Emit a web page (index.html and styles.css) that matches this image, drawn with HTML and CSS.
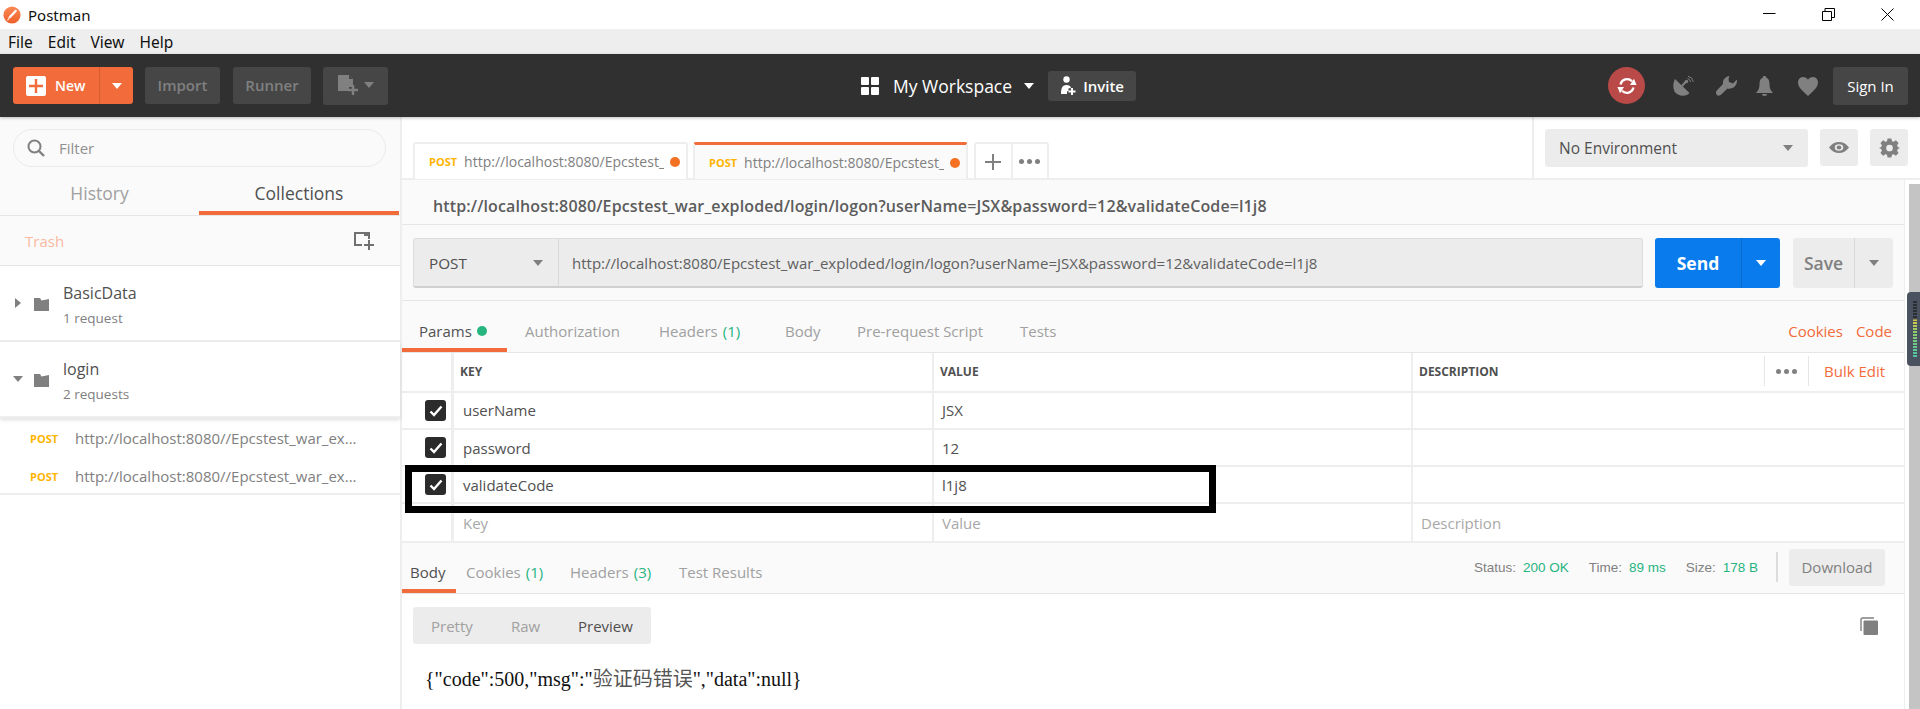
FILE: index.html
```html
<!DOCTYPE html>
<html lang="en">
<head>
<meta charset="utf-8">
<title>Postman</title>
<link rel="stylesheet" href="styles.css">
</head>
<body>
<div class="titlebar">
  <svg class="logo" viewBox="0 0 20 20"><defs><linearGradient id="lg" x1="0" y1="0" x2="0" y2="1"><stop offset="0" stop-color="#fb8a55"/><stop offset="1" stop-color="#ef5f28"/></linearGradient></defs><circle cx="10" cy="10" r="9.500" fill="url(#lg)"/><path d="M7.500 12.500l6.500-7" stroke="#fff" stroke-width="2.600" stroke-linecap="round"/><path d="M7.500 12.500L5 16" stroke="#ffe0d0" stroke-width="1.300"/></svg>
  <span class="app-name">Postman</span>
  <div class="win-controls">
    <svg class="win-icon" viewBox="0 0 13 13"><path d="M0 5.500h12.500" stroke="#000" stroke-width="1"/></svg>
    <svg class="win-icon" viewBox="0 0 13 13"><path d="M.5 3.500h9v9h-9zM3 3.500V.5h9.500v9H9.500" fill="none" stroke="#000" stroke-width="1"/></svg>
    <svg class="win-icon" viewBox="0 0 13 13"><path d="M.5.5l12 12M12.500.5l-12 12" stroke="#000" stroke-width="1"/></svg>
  </div>
</div>
<nav class="menubar"><span>File</span><span>Edit</span><span>View</span><span>Help</span></nav>
<header class="topbar">
  <div class="top-left">
    <div class="btn-new">
      <div class="btn-new-main">
        <svg class="plus-box" viewBox="0 0 20 20"><rect width="20" height="20" rx="2" fill="#fff"/><path d="M10 3v14M3 10h14" stroke="#f26b3a" stroke-width="2.400"/></svg>
        <span>New</span>
      </div>
      <div class="btn-new-caret"><span class="caret caret-white"></span></div>
    </div>
    <div class="btn-dark btn-import">Import</div>
    <div class="btn-dark btn-runner">Runner</div>
    <div class="btn-dark btn-add">
      <svg class="add-icon" viewBox="0 0 20 20"><path d="M0 0h11l4 4v8h-4v4H0z" fill="#808080"/><path d="M11 0v4h4" fill="#464646"/><path d="M15 10v10M10 15h10" stroke="#808080" stroke-width="2.400"/></svg>
      <span class="caret caret-grey"></span>
    </div>
  </div>
  <div class="top-center">
    <svg class="grid-icon" viewBox="0 0 18 18"><rect width="8" height="8" rx="1" fill="#fff"/><rect x="10" width="8" height="8" rx="1" fill="#fff"/><rect y="10" width="8" height="8" rx="1" fill="#fff"/><rect x="10" y="10" width="8" height="8" rx="1" fill="#fff"/></svg>
    <span class="ws-name">My Workspace</span>
    <span class="caret caret-white ws-caret"></span>
    <div class="btn-invite">
      <svg class="invite-icon" viewBox="0 0 16 20"><circle cx="6.500" cy="3.500" r="3.200" fill="#fff"/><path d="M1 18c0-6 1.500-9 5.500-9 2.500 0 4 1 4.700 3.200H8.500v3H7V18z" fill="#fff"/><path d="M12 12v7M8.500 15.500h7" stroke="#fff" stroke-width="2"/></svg>
      <span>Invite</span>
    </div>
  </div>
  <div class="top-right">
    <div class="sync">
      <svg viewBox="0 0 20 20" class="sync-icon"><path d="M3.500 8.500A6.800 6.800 0 0 1 15 5.200" fill="none" stroke="#fff" stroke-width="2.200"/><path d="M12.500 8.500L19 9.500 17.500 3z" fill="#fff" transform="rotate(-10 16 6)"/><path d="M16.500 11.500A6.800 6.800 0 0 1 5 14.800" fill="none" stroke="#fff" stroke-width="2.200"/><path d="M7.500 11.500L1 10.500 2.500 17z" fill="#fff" transform="rotate(-10 4 14)"/></svg>
    </div>
    <svg class="tb-icon sat" viewBox="0 0 21 20"><path d="M2 3C-1 9 0 16 5 18.500c4 2 9 1.500 11.500-1.500z" fill="#808080"/><path d="M9 10l4-4.500" stroke="#808080" stroke-width="2"/><circle cx="13.500" cy="5.500" r="1.700" fill="#808080"/><path d="M14.500 2.500a4 4 0 0 1 3 3.500M15 .3a6.500 6.500 0 0 1 5.300 5.500" fill="none" stroke="#808080" stroke-width="1"/></svg>
    <svg class="tb-icon wrench" viewBox="0 0 21 20"><path d="M13.500 0C9.500.5 6.500 3.500 7 8L.8 14.500C-.5 16-.2 18 1 19c1.300 1.200 3 .8 4.200-.4L11.500 12.500c5 1 9.500-2.500 9.500-7.500v-1.500L17 7.500 13 6l-.5-3z" fill="#808080"/></svg>
    <svg class="tb-icon bell" viewBox="0 0 17 20"><path d="M8.500 0C9.800 0 10.300.7 10.300 1.700c2.700 1 3.200 3.500 3.200 6.800 0 3.500 1 6 3.500 8.500H0c2.500-2.500 3.500-5 3.500-8.500 0-3.300.5-5.800 3.200-6.800C6.700.7 7.200 0 8.500 0z" fill="#808080"/><path d="M6 18h5c0 1.300-1 2-2.500 2S6 19.300 6 18z" fill="#808080"/></svg>
    <svg class="tb-icon heart" viewBox="0 0 21 20"><path d="M10.500 20C5 14.500 0 11 0 5.700 0 2.300 2.500 0 5.300 0c2.200 0 4 1 5.200 3C11.700 1 13.500 0 15.700 0 18.500 0 21 2.300 21 5.700 21 11 16 14.500 10.500 20z" fill="#808080"/></svg>
    <div class="btn-signin">Sign In</div>
  </div>
</header>
<div class="workspace">
  <aside class="sidebar">
    <div class="filter-wrap">
      <div class="filter">
        <svg class="search-icon" viewBox="0 0 18 18"><circle cx="7.500" cy="7.500" r="6" fill="none" stroke="#808080" stroke-width="2"/><path d="M12 12l5 5" stroke="#808080" stroke-width="2.400"/></svg>
        <span>Filter</span>
      </div>
    </div>
    <div class="side-tabs">
      <div class="side-tab">History</div>
      <div class="side-tab side-tab-active">Collections</div>
    </div>
    <div class="trash-row">
      <span>Trash</span>
      <svg class="newcol" viewBox="0 0 20 18"><path d="M8 13H1V1h14v6" fill="none" stroke="#707070" stroke-width="2"/><path d="M10 1h5v3h-5z" fill="#707070"/><path d="M15 8v10M10 13h10" stroke="#707070" stroke-width="2"/></svg>
    </div>
    <div class="coll">
      <span class="tri-right"></span>
      <svg class="folder" viewBox="0 0 15 13"><path d="M0 0h6l1.500 2.500L15 1v12H0z" fill="#808080"/></svg>
      <div class="coll-text"><div class="coll-name">BasicData</div><div class="coll-sub">1 request</div></div>
    </div>
    <div class="coll coll-open">
      <span class="tri-down"></span>
      <svg class="folder" viewBox="0 0 15 13"><path d="M0 0h6l1.500 2.500L15 1v12H0z" fill="#808080"/></svg>
      <div class="coll-text"><div class="coll-name">login</div><div class="coll-sub">2 requests</div></div>
    </div>
    <div class="req-list">
      <div class="req"><span class="post">POST</span><span class="req-url">http://localhost:8080//Epcstest_war_ex...</span></div>
      <div class="req"><span class="post">POST</span><span class="req-url">http://localhost:8080//Epcstest_war_ex...</span></div>
    </div>
  </aside>
  <main class="main">
    <div class="strip">
      <div class="tabs">
        <div class="tab">
          <span class="post">POST</span><span class="tab-url">http://localhost:8080/Epcstest_w</span><span class="dot"></span>
        </div>
        <div class="tab tab-active">
          <span class="post">POST</span><span class="tab-url">http://localhost:8080/Epcstest_w</span><span class="dot"></span>
        </div>
        <div class="tab-tools">
          <div class="tab-tool"><svg class="plus-icon" viewBox="0 0 16 16"><path d="M8 0v16M0 8h16" stroke="#808080" stroke-width="2"/></svg></div>
          <div class="tab-tool"><span class="dots"><i></i><i></i><i></i></span></div>
        </div>
      </div>
      <div class="env">
        <div class="env-select"><span>No Environment</span><span class="caret caret-grey"></span></div>
        <div class="env-btn">
          <svg class="eye" viewBox="0 0 20 14" preserveAspectRatio="none"><path d="M0 7C3 2 6 0 10 0s7 2 10 7c-3 5-6 7-10 7S3 12 0 7z" fill="#808080"/><circle cx="10" cy="7" r="4.200" fill="#ececec"/><circle cx="10" cy="7" r="2.400" fill="#808080"/></svg>
        </div>
        <div class="env-btn">
          <svg class="gear" viewBox="-1 0 22 20"><path d="M8 0h4l.6 2.800 1.700.7L16.700 2l2.800 2.800-1.500 2.400.7 1.700L21 10l-2.300 1.100-.7 1.700 1.500 2.400-2.800 2.800-2.400-1.500-1.700.7L12 20H8l-.6-2.800-1.700-.7L3.300 18 .5 15.200 2 12.800l-.7-1.700L-1 10l2.300-1.100.7-1.700L.5 4.800 3.300 2l2.400 1.500 1.700-.7z" fill="#808080"/><circle cx="10" cy="10" r="3.500" fill="#ececec"/></svg>
        </div>
      </div>
    </div>
    <div class="body-row">
      <div class="content">
        <div class="url-title">http://localhost:8080/Epcstest_war_exploded/login/logon?userName=JSX&amp;password=12&amp;validateCode=l1j8</div>
        <div class="req-bar">
          <div class="url-group">
            <div class="method"><span>POST</span><span class="caret caret-grey"></span></div>
            <div class="url-input">http://localhost:8080/Epcstest_war_exploded/login/logon?userName=JSX&amp;password=12&amp;validateCode=l1j8</div>
          </div>
          <div class="send"><div class="send-main">Send</div><div class="send-caret"><span class="caret caret-white"></span></div></div>
          <div class="save"><div class="save-main">Save</div><div class="save-caret"><span class="caret caret-grey"></span></div></div>
        </div>
        <div class="req-tabs">
          <div class="rt rt-active rt-params">Params <span class="gdot"></span></div>
          <div class="rt rt-auth">Authorization</div>
          <div class="rt rt-headers">Headers <span class="count">(1)</span></div>
          <div class="rt rt-body">Body</div>
          <div class="rt rt-pre">Pre-request Script</div>
          <div class="rt">Tests</div>
          <div class="rt-links"><span>Cookies</span><span>Code</span></div>
        </div>
        <div class="table">
          <div class="tr tr-head">
            <div class="td td-check"></div>
            <div class="td td-key th">KEY</div>
            <div class="td td-val th">VALUE</div>
            <div class="td td-desc th">
              <span>DESCRIPTION</span>
              <div class="th-tools">
                <div class="th-dots"><span class="dots"><i></i><i></i><i></i></span></div>
                <div class="bulk">Bulk Edit</div>
              </div>
            </div>
          </div>
          <div class="tr tr-first">
            <div class="td td-check"><span class="check"><svg viewBox="0 0 14 12"><path d="M1.500 6.500l3.500 3.500 7.500-8.500" fill="none" stroke="#fff" stroke-width="2.400"/></svg></span></div>
            <div class="td td-key">userName</div><div class="td td-val">JSX</div><div class="td td-desc"></div>
          </div>
          <div class="tr">
            <div class="td td-check"><span class="check"><svg viewBox="0 0 14 12"><path d="M1.500 6.500l3.500 3.500 7.500-8.500" fill="none" stroke="#fff" stroke-width="2.400"/></svg></span></div>
            <div class="td td-key">password</div><div class="td td-val">12</div><div class="td td-desc"></div>
          </div>
          <div class="tr">
            <div class="td td-check"><span class="check"><svg viewBox="0 0 14 12"><path d="M1.500 6.500l3.500 3.500 7.500-8.500" fill="none" stroke="#fff" stroke-width="2.400"/></svg></span></div>
            <div class="td td-key">validateCode</div><div class="td td-val">l1j8</div><div class="td td-desc"></div>
          </div>
          <div class="tr tr-empty">
            <div class="td td-check"></div>
            <div class="td td-key">Key</div><div class="td td-val">Value</div><div class="td td-desc">Description</div>
          </div>
        </div>
        <div class="res-bar">
          <div class="rt rt-active rt-resbody">Body</div>
          <div class="rt rt-cookies">Cookies <span class="count">(1)</span></div>
          <div class="rt rt-resheaders">Headers <span class="count">(3)</span></div>
          <div class="rt">Test Results</div>
          <div class="res-meta">
            <span class="m-label">Status:</span><span class="m-val m-status">200 OK</span>
            <span class="m-label">Time:</span><span class="m-val m-time">89 ms</span>
            <span class="m-label">Size:</span><span class="m-val m-size">178 B</span>
            <span class="m-div"></span>
            <div class="download">Download</div>
          </div>
        </div>
        <div class="res-body">
          <div class="res-tools">
            <div class="seg"><span class="seg-pretty">Pretty</span><span class="seg-raw">Raw</span><span class="seg-preview">Preview</span></div>
            <svg class="copy" viewBox="0 0 18 18"><path d="M1 14V2.500C1 1.500 1.500 1 2.500 1H14" fill="none" stroke="#808080" stroke-width="1.400"/><rect x="3.500" y="3.500" width="14.500" height="14.500" rx="1" fill="#808080"/></svg>
          </div>
          <div class="preview">{"code":500,"msg":"<span class="cjk">验证码错误</span>","data":null}</div>
        </div>
      </div>
      <div class="gutter"><div class="thumb"></div></div>
    </div>
    <div class="highlight"></div>
    <div class="meter"><div class="meter-bars"></div></div>
  </main>
</div>
</body>
</html>
```
FILE: styles.css
```css
* { box-sizing: border-box; }
html, body { margin: 0; padding: 0; height: 709px; overflow: hidden; background: #fff; }
body { font-family: "Open Sans", "Noto Sans", sans-serif; font-size: 15px; color: #505050; }

.titlebar { height: 29px; display: flex; align-items: center; padding-left: 3px; background: #fff; }
.logo { width: 18px; height: 18px; }
.app-name { margin-left: 7px; font-size: 15px; color: #111; font-family: "Noto Sans", sans-serif; }
.win-controls { margin-left: auto; display: flex; gap: 46px; padding-right: 26px; }
.win-icon { width: 13px; height: 13px; display: block; }

.menubar { height: 25px; background: #eee; display: flex; align-items: center; padding-left: 8px; gap: 15px; font-family: "Noto Sans", sans-serif; font-size: 15.500px; color: #111; }

.topbar { height: 63px; background: #303030; display: flex; align-items: center; padding: 0 12px 0 13px; box-shadow: 0 1px 3px rgba(0,0,0,.25); position: relative; z-index: 3; }
.top-left { display: flex; align-items: center; gap: 12px; width: 375px; }
.btn-new { display: flex; height: 37px; width: 120px; border-radius: 3px; background: #f26b3a; color: #fff; font-weight: 600; font-size: 14px; }
.btn-new-main { width: 87px; display: flex; align-items: center; padding-left: 13px; gap: 9px; border-right: 1px solid #d95c2e; }
.plus-box { width: 20px; height: 20px; }
.btn-new-caret { flex: 1; display: flex; align-items: center; justify-content: center; }
.caret { display: inline-block; width: 0; height: 0; border-left: 5px solid transparent; border-right: 5px solid transparent; border-top: 6px solid #808080; }
.caret-white { border-top-color: #fff; }
.caret-grey { border-top-color: #808080; }
.btn-dark { height: 37px; background: #464646; border-radius: 3px; color: #808080; display: flex; align-items: center; justify-content: center; font-weight: 600; padding-bottom: 2px; }
.btn-import { width: 75px; }
.btn-runner { width: 78px; margin-left: 1px; }
.btn-add { width: 65px; height: 38px; gap: 6px; }
.add-icon { width: 20px; height: 20px; }

.top-center { display: flex; align-items: center; margin-left: 473px; }
.grid-icon { width: 18px; height: 18px; }
.ws-name { margin-left: 14px; color: #fff; font-size: 17.500px; }
.ws-caret { margin-left: 12px; }
.btn-invite { margin-left: 14px; width: 88px; height: 30px; background: #464646; border-radius: 3px; display: flex; align-items: center; justify-content: center; gap: 7px; color: #fff; font-weight: 600; }
.invite-icon { width: 16px; height: 20px; }

.top-right { margin-left: auto; display: flex; align-items: center; }
.sync { width: 37px; height: 37px; border-radius: 50%; background: #b94a48; display: flex; align-items: center; justify-content: center; }
.sync-icon { width: 20px; height: 20px; }
.tb-icon { width: 21px; height: 20px; }
.sat { margin-left: 28px; }
.wrench { margin-left: 22px; }
.bell { margin-left: 19px; width: 17px; }
.heart { margin-left: 25px; width: 20px; height: 19px; margin-top: 1px; }
.btn-signin { margin-left: 15px; width: 75px; height: 38px; background: #464646; border-radius: 3px; color: #fff; display: flex; align-items: center; justify-content: center; }

.workspace { display: flex; height: 592px; }

.sidebar { width: 400px; flex: none; background: #fff; box-shadow: 2px 0 0 #eee; display: flex; flex-direction: column; position: relative; z-index: 2; }
.filter-wrap { flex: none; background: #fafafa; padding: 12px 13px 0; height: 50px; }
.filter { height: 38px; width: 373px; border: 1px solid #eaeaea; border-radius: 19px; display: flex; align-items: center; padding-left: 13px; gap: 14px; color: #909090; background: #fafafa; }
.search-icon { width: 18px; height: 18px; }
.side-tabs { height: 49px; flex: none; display: flex; background: #fafafa; border-bottom: 1px solid #e6e6e6; }
.side-tab { width: 199px; height: 48px; display: flex; align-items: center; justify-content: center; font-size: 17.500px; color: #a0a0a0; padding-top: 8px; padding-bottom: 4px; }
.side-tab-active { width: 200px; color: #505050; border-bottom: 4px solid #f26b3a; padding-bottom: 0; }
.trash-row { height: 50px; flex: none; background: #fafafa; border-bottom: 1px solid #e6e6e6; display: flex; align-items: center; padding: 1px 26px 0 25px; justify-content: space-between; color: #f9b9a0; }
.newcol { width: 20px; height: 18px; }
.coll { height: 76px; flex: none; display: flex; align-items: center; border-bottom: 2px solid #eee; padding-left: 15px; }
.tri-right { width: 0; height: 0; border-top: 5px solid transparent; border-bottom: 5px solid transparent; border-left: 6px solid #808080; }
.tri-down { width: 0; height: 0; margin-left: -2px; border-left: 5px solid transparent; border-right: 5px solid transparent; border-top: 6px solid #808080; }
.folder { width: 15px; height: 13px; margin-left: 13px; margin-top: 2px; }
.coll-open .folder { margin-left: 11px; }
.coll-text { margin-left: 14px; padding-top: 5px; }
.coll-name { font-size: 16px; color: #505050; line-height: 24px; }
.coll-sub { font-size: 13.500px; color: #808080; line-height: 24px; margin-top: 1px; }
.coll-open { box-shadow: 0 2px 4px rgba(0,0,0,.12); position: relative; }
.req-list { border-bottom: 2px solid #eee; padding-top: 1px; height: 77px; }
.req { height: 38px; display: flex; align-items: center; padding-left: 30px; }
.req .post { width: 45px; }
.post { color: #ffb400; font-size: 11px; font-weight: 700; }
.req-url { color: #808080; font-size: 15px; }

.main { flex: 1; min-width: 0; display: flex; flex-direction: column; position: relative; }
.strip { height: 63px; flex: none; display: flex; border-bottom: 2px solid #eee; background: #fff; }
.tabs { width: 1130px; padding: 25px 0 0 13px; display: flex; align-items: flex-start; flex: none; }
.tab { width: 275px; height: 37px; margin-right: 5px; border: 2px solid #eee; border-bottom: 0; border-radius: 3px 3px 0 0; display: flex; align-items: center; padding: 0 6px 0 14px; background: #fff; }
.tab-active { background: #fafafa; border-top: 3px solid #f26b3a; padding-top: 1px; }
.tab .post { flex: none; margin-right: 7px; }
.tab-url { flex: 1; min-width: 0; overflow: hidden; white-space: nowrap; color: #808080; font-size: 14px; }
.dot { width: 10px; height: 10px; border-radius: 50%; background: #f47023; flex: none; margin-left: 6px; }
.tab-tools { display: flex; height: 37px; width: 75px; border: 2px solid #eee; border-bottom: 0; border-radius: 3px 3px 0 0; margin-left: 1px; }
.tab-tool { flex: 1; display: flex; align-items: center; justify-content: center; }
.tab-tool + .tab-tool { border-left: 2px solid #eee; }
.plus-icon { width: 16px; height: 16px; }
.dots { display: flex; gap: 3px; }
.dots i { width: 5px; height: 5px; border-radius: 50%; background: #808080; }
.env { flex: 1; margin-left: 2px; border-left: 2px solid #eee; display: flex; padding: 12px 0 0 11px; gap: 12px; }
.env-select { width: 263px; height: 38px; background: #ececec; border-radius: 3px; display: flex; align-items: center; justify-content: space-between; padding: 0 15px 0 14px; font-size: 15.500px; }
.env-btn { width: 38px; height: 37px; background: #ececec; border-radius: 3px; display: flex; align-items: center; justify-content: center; }
.eye { width: 20px; height: 11px; }
.gear { width: 21px; height: 20px; }

.body-row { flex: 1; display: flex; min-height: 0; }
.content { width: 1505px; flex: none; border-right: 1px solid #eee; display: flex; flex-direction: column; background: #fff; }
.gutter { flex: 1; padding: 4px 0 0 4px; }
.thumb { height: 100%; background: #c4c4c4; }

.url-title { height: 45px; flex: none; background: #fafafa; border-bottom: 1px solid #e6e6e6; padding: 8px 0 0 33px; display: flex; align-items: center; font-size: 16px; font-weight: 600; color: #5c5c5c; letter-spacing: .125px; white-space: nowrap; }
.req-bar { height: 76px; flex: none; background: #fafafa; border-bottom: 1px solid #e6e6e6; display: flex; padding: 13px 0 0 13px; }
.url-group { width: 1230px; height: 50px; display: flex; background: #ececec; border: 1px solid #ddd; border-bottom: 2px solid #d0d0d0; border-radius: 3px; }
.method { width: 145px; flex: none; display: flex; align-items: center; justify-content: space-between; padding: 0 15px; border-right: 1px solid #d8d8d8; font-size: 15.300px; }
.url-input { flex: 1; display: flex; align-items: center; padding-left: 13px; font-size: 15px; color: #606060; white-space: nowrap; }
.send { margin-left: 12px; width: 125px; height: 50px; background: #097bed; border-radius: 3px; color: #fff; font-weight: 700; font-size: 17.500px; display: flex; }
.send-main { width: 87px; display: flex; align-items: center; justify-content: center; border-right: 1px solid #0a6ccf; }
.send-caret { flex: 1; display: flex; align-items: center; justify-content: center; }
.save { margin-left: 13px; width: 100px; height: 50px; background: #ececec; border-radius: 3px; color: #808080; font-weight: 600; font-size: 17.500px; display: flex; }
.save-main { width: 62px; display: flex; align-items: center; justify-content: center; border-right: 1px solid #d8d8d8; }
.save-caret { flex: 1; display: flex; align-items: center; justify-content: center; }

.req-tabs { height: 52px; flex: none; background: #fafafa; border-bottom: 1px solid #e6e6e6; display: flex; align-items: stretch; padding-right: 12px; }
.rt { display: flex; align-items: center; gap: 5px; color: #a0a0a0; padding-top: 13px; padding-bottom: 4px; white-space: nowrap; }
.rt-active { color: #505050; border-bottom: 4px solid #f26b3a; padding-bottom: 0; }
.rt-params { width: 107px; padding-left: 19px; margin-right: 18px; }
.rt-auth { width: 134px; }
.rt-headers { width: 126px; }
.rt-body { width: 72px; }
.rt-pre { width: 163px; }
.count { color: #26b47f; }
.gdot { width: 10px; height: 10px; border-radius: 50%; background: #26b47f; }
.rt-links { margin-left: auto; display: flex; align-items: center; gap: 13px; color: #f26b3a; padding-top: 13px; padding-bottom: 4px; }

.table { flex: none; background: #fff; }
.tr { display: flex; height: 37px; border-bottom: 2px solid #eee; }
.tr-head { height: 40px; }
.tr-head .td { padding-bottom: 2px; }
.tr-first .td-key, .tr-first .td-val { padding-bottom: 2px; }
.tr-empty { height: 39px; }
.td { display: flex; align-items: center; border-left: 2px solid #eee; padding-left: 8px; }
.td-check { width: 54px; border-left: 0; border-right: 3px solid #eee; justify-content: flex-end; padding-right: 5px; }
.td-key { width: 478px; padding-left: 9px; border-left: 0; }
.td-val { width: 479px; }
.td-desc { flex: 1; }
.th { font-size: 12px; font-weight: 700; color: #505050; padding-left: 6px; }
.td-key.th { padding-left: 6px; }
.th-tools { margin-left: auto; display: flex; align-items: center; height: 30px; font-size: 15px; font-weight: 400; }
.th-dots { width: 45px; height: 30px; border-left: 1px solid #e6e6e6; border-right: 1px solid #e6e6e6; display: flex; align-items: center; justify-content: center; }
.bulk { width: 95px; padding-left: 15px; color: #f26b3a; }
.check { width: 21px; height: 21px; background: #2b2b2b; border-radius: 3px; display: flex; align-items: center; justify-content: center; }
.check svg { width: 14px; height: 12px; }
.tr-empty .td-key, .tr-empty .td-val, .tr-empty .td-desc { color: #a8a8a8; }

.res-bar { height: 51px; flex: none; background: #fafafa; border-bottom: 1px solid #e6e6e6; display: flex; align-items: stretch; }
.res-bar .rt { padding-top: 11px; }
.rt-resbody { width: 56px; padding-left: 10px; margin-right: 10px; }
.rt-cookies { width: 104px; }
.rt-resheaders { width: 109px; }
.res-meta { margin-left: auto; display: flex; align-items: center; font-family: "Liberation Sans", Arial, sans-serif; font-size: 13.500px; color: #808080; padding-right: 19px; padding-bottom: 2px; }
.m-val { color: #26b47f; margin-left: 7px; }
.m-status, .m-time { margin-right: 20px; }
.m-size { margin-right: 18px; }
.m-div { width: 2px; height: 30px; background: #dcdcdc; margin-right: 11px; }
.download { width: 96px; height: 37px; background: #ececec; border-radius: 3px; display: flex; align-items: center; justify-content: center; font-family: "Open Sans", sans-serif; font-size: 15px; color: #808080; }

.res-body { flex: 1; background: #fff; padding: 13px 26px 0 13px; }
.res-tools { display: flex; align-items: center; justify-content: space-between; }
.seg { width: 238px; height: 37px; background: #ececec; border-radius: 3px; display: flex; align-items: center; color: #a0a0a0; padding-left: 18px; }
.seg-pretty { width: 80px; }
.seg-raw { width: 67px; }
.seg-preview { color: #505050; }
.copy { width: 18px; height: 18px; }
.preview { margin: 23px 0 0 12px; font-family: "Liberation Serif", "Noto Sans CJK SC", serif; font-size: 20px; color: #111; line-height: 24px; }
.cjk { color: #555; }

.highlight { position: absolute; left: 5px; top: 348px; width: 811px; height: 48px; border: 7px solid #000; pointer-events: none; }
.meter { position: absolute; right: 0; top: 175px; width: 13px; height: 74px; background: #4a5260; border-radius: 4px 0 0 4px; padding: 9px 3px 9px 6px; }
.meter-bars { width: 4px; height: 100%; background: repeating-linear-gradient(to bottom, transparent 0 2px, #4a5260 2px 3px), linear-gradient(to bottom, #2b2f36 0 30%, #d8c84a 35%, #8fcf6a 55%, #4fc3a8 100%); }
```
